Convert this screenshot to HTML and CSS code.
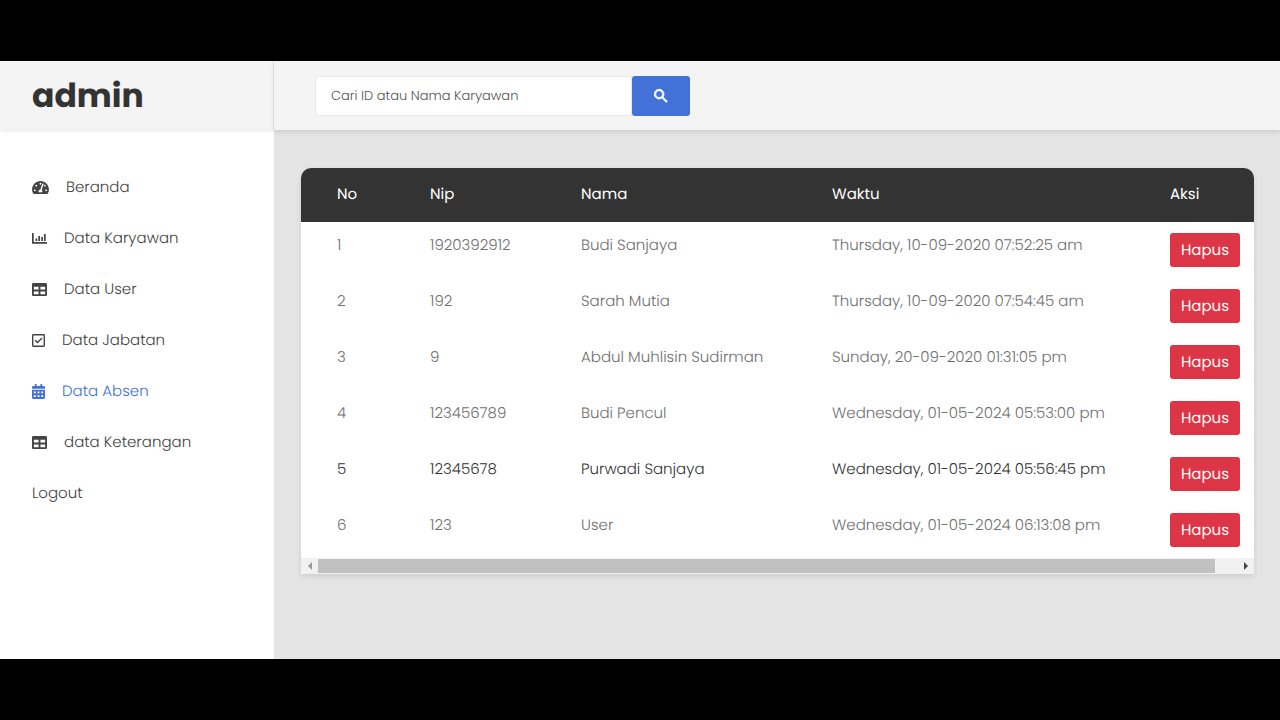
FILE: index.html
```
<!DOCTYPE html>
<html lang="id">
<head>
    <meta charset="UTF-8">
    <meta name="viewport" content="width=device-width, initial-scale=1.0">
    <title>Data Absen</title>
    <link rel="stylesheet" href="styles.css">
</head>
<body>
    <div class="page">
        <aside class="sidebar">
            <div class="logo">
                <h1>admin</h1>
            </div>
            <nav class="menu">
                <ul>
                    <li>
                        <a href="#">
                            <svg width="17" height="15" viewBox="0 0 576 512"><path d="M288 32C128.94 32 0 160.94 0 320c0 52.8 14.25 102.26 39.06 144.8 5.61 9.62 16.3 15.2 27.44 15.2h443c11.14 0 21.83-5.58 27.44-15.2C561.75 422.26 576 372.8 576 320c0-159.06-128.94-288-288-288zm0 64c14.71 0 26.58 10.13 30.32 23.65-1.11 2.26-2.64 4.23-3.45 6.67l-9.22 27.67c-5.13 3.49-10.97 6.01-17.64 6.01-17.67 0-32-14.33-32-32S270.33 96 288 96zM96 384c-17.67 0-32-14.33-32-32s14.33-32 32-32 32 14.33 32 32-14.33 32-32 32zm48-160c-17.67 0-32-14.33-32-32s14.33-32 32-32 32 14.33 32 32-14.33 32-32 32zm246.77-72.41l-61.33 184C343.13 347.33 352 364.54 352 384c0 11.72-3.38 22.55-8.88 32H232.88c-5.5-9.45-8.88-20.28-8.88-32 0-33.94 26.5-61.43 59.9-63.59l61.34-184.01c4.17-12.56 17.73-19.45 30.36-15.17 12.57 4.19 19.35 17.79 15.17 30.36zm14.66 57.2l15.52-46.55c3.47-1.29 7.13-2.23 11.05-2.23 17.67 0 32 14.33 32 32s-14.33 32-32 32c-11.38-.01-20.89-6.28-26.57-15.22zM480 384c-17.67 0-32-14.33-32-32s14.33-32 32-32 32 14.33 32 32-14.33 32-32 32z"/></svg>
                            Beranda
                        </a>
                    </li>
                    <li>
                        <a href="#">
                            <svg width="15" height="15" viewBox="0 0 15 15"><path d="M0 2h1.700v9H15v1.800H.5a.5.5 0 0 1-.5-.5zM3.500 7.500h1.700V10H3.500zM6.300 5H8v5H6.300zM9.200 6h1.700v4H9.200zM12 3h1.700v7H12z"/></svg>
                            Data Karyawan
                        </a>
                    </li>
                    <li>
                        <a href="#">
                            <svg width="15" height="15" viewBox="0 0 512 512"><path d="M464 32H48C21.49 32 0 53.49 0 80v352c0 26.51 21.490 48 48 48h416c26.510 0 48-21.490 48-48V80c0-26.510-21.490-48-48-48zM224 416H64v-96h160v96zm0-160H64v-96h160v96zm224 160H288v-96h160v96zm0-160H288v-96h160v96z"/></svg>
                            Data User
                        </a>
                    </li>
                    <li>
                        <a href="#">
                            <svg width="13" height="15" viewBox="0 0 448 512"><path fill-rule="evenodd" d="M48 32h352a48 48 0 0 1 48 48v352a48 48 0 0 1-48 48H48a48 48 0 0 1-48-48V80a48 48 0 0 1 48-48zm0 48v352h352V80zM88 262l36-35 66 65 136-136 35 35-171 171z"/></svg>
                            Data Jabatan
                        </a>
                    </li>
                    <li>
                        <a href="#" class="active">
                            <svg width="13" height="15" viewBox="0 0 448 512"><path fill-rule="evenodd" d="M0 160v-48a48 48 0 0 1 48-48h48V12a12 12 0 0 1 12-12h40a12 12 0 0 1 12 12v52h128V12a12 12 0 0 1 12-12h40a12 12 0 0 1 12 12v52h48a48 48 0 0 1 48 48v48zM0 192h448v272a48 48 0 0 1-48 48H48a48 48 0 0 1-48-48zM64 256v64h64v-64zM192 256v64h64v-64zM320 256v64h64v-64zM64 384v64h64v-64zM192 384v64h64v-64zM320 384v64h64v-64z"/></svg>
                            Data Absen
                        </a>
                    </li>
                    <li>
                        <a href="#">
                            <svg width="15" height="15" viewBox="0 0 512 512"><path d="M464 32H48C21.49 32 0 53.49 0 80v352c0 26.51 21.490 48 48 48h416c26.510 0 48-21.490 48-48V80c0-26.510-21.490-48-48-48zM224 416H64v-96h160v96zm0-160H64v-96h160v96zm224 160H288v-96h160v96zm0-160H288v-96h160v96z"/></svg>
                            data Keterangan
                        </a>
                    </li>
                    <li><a href="#">Logout</a></li>
                </ul>
            </nav>
        </aside>

        <div class="content">
            <header class="header">
                <form class="search">
                    <input type="text" name="cari" placeholder="Cari ID atau Nama Karyawan" aria-label="Cari ID atau Nama Karyawan">
                    <button type="submit" aria-label="Cari">
                        <svg width="18" height="18" viewBox="0 0 24 24"><path stroke="currentColor" d="M15.5 14h-.79l-.28-.27A6.47 6.47 0 0 0 16 9.500 6.500 6.500 0 1 0 9.500 16c1.610 0 3.090-.590 4.230-1.570l.270.280v.790l5 4.990L20.490 19l-4.990-5zm-6 0C7.010 14 5 11.990 5 9.500S7.010 5 9.500 5 14 7.010 14 9.500 11.990 14 9.500 14z"/></svg>
                    </button>
                </form>
            </header>

            <main>
                <div class="card">
                    <div class="table-wrap">
                        <table>
                            <colgroup>
                                <col class="col-no">
                                <col class="col-nip">
                                <col class="col-nama">
                                <col class="col-waktu">
                                <col>
                            </colgroup>
                            <thead>
                                <tr>
                                    <th>No</th>
                                    <th>Nip</th>
                                    <th>Nama</th>
                                    <th>Waktu</th>
                                    <th>Aksi</th>
                                </tr>
                            </thead>
                            <tbody>
                                <tr>
                                    <td>1</td>
                                    <td>1920392912</td>
                                    <td>Budi Sanjaya</td>
                                    <td>Thursday, 10-09-2020 07:52:25 am</td>
                                    <td><button type="button" class="btn-hapus">Hapus</button></td>
                                </tr>
                                <tr>
                                    <td>2</td>
                                    <td>192</td>
                                    <td>Sarah Mutia</td>
                                    <td>Thursday, 10-09-2020 07:54:45 am</td>
                                    <td><button type="button" class="btn-hapus">Hapus</button></td>
                                </tr>
                                <tr>
                                    <td>3</td>
                                    <td>9</td>
                                    <td>Abdul Muhlisin Sudirman</td>
                                    <td>Sunday, 20-09-2020 01:31:05 pm</td>
                                    <td><button type="button" class="btn-hapus">Hapus</button></td>
                                </tr>
                                <tr>
                                    <td>4</td>
                                    <td>123456789</td>
                                    <td>Budi Pencul</td>
                                    <td>Wednesday, 01-05-2024 05:53:00 pm</td>
                                    <td><button type="button" class="btn-hapus">Hapus</button></td>
                                </tr>
                                <tr class="hover">
                                    <td>5</td>
                                    <td>12345678</td>
                                    <td>Purwadi Sanjaya</td>
                                    <td>Wednesday, 01-05-2024 05:56:45 pm</td>
                                    <td><button type="button" class="btn-hapus">Hapus</button></td>
                                </tr>
                                <tr>
                                    <td>6</td>
                                    <td>123</td>
                                    <td>User</td>
                                    <td>Wednesday, 01-05-2024 06:13:08 pm</td>
                                    <td><button type="button" class="btn-hapus">Hapus</button></td>
                                </tr>
                            </tbody>
                        </table>
                    </div>
                    <div class="scrollbar">
                        <button type="button" class="arrow" aria-label="Geser kiri" disabled>
                            <svg width="4" height="8" viewBox="0 0 4 8"><path d="M4 0v8L0 4z"/></svg>
                        </button>
                        <div class="track"><div class="thumb"></div></div>
                        <button type="button" class="arrow" aria-label="Geser kanan">
                            <svg width="4" height="8" viewBox="0 0 4 8"><path d="M0 0v8l4-4z"/></svg>
                        </button>
                    </div>
                </div>
            </main>
        </div>
    </div>
</body>
</html>
```
FILE: styles.css
```
* {
    box-sizing: border-box;
    margin: 0;
    padding: 0;
}

body {
    display: flex;
    min-height: 100vh;
    padding: 61px 0;
    background: #000;
    color: #4d4d4d;
    font-family: Poppins, Inter, sans-serif;
    font-size: 15px;
    line-height: 26px;
    text-rendering: geometricPrecision;
}

button,
input {
    font-family: inherit;
    border: none;
    text-rendering: inherit;
}

svg {
    display: block;
    fill: currentColor;
}

.page {
    display: flex;
    flex: 1;
    background: #e4e4e4;
}

/* Sidebar */
.sidebar {
    width: 274px;
    flex-shrink: 0;
    background: #fff;
}

.logo {
    display: flex;
    align-items: center;
    height: 69px;
    padding: 0 32px;
    background: #f4f4f4;
    border-right: 1px solid #e4e4e4;
    box-shadow: 0 1px 3px rgba(0, 0, 0, 0.1);
}

.logo h1 {
    color: #333;
    font-size: 33px;
    font-weight: 700;
}

.menu {
    padding: 32px 32px 0;
}

.menu ul {
    list-style: none;
}

.menu a {
    display: flex;
    align-items: center;
    gap: 17px;
    height: 51px;
    color: #444;
    font-weight: 300;
    text-decoration: none;
}

.menu a.active,
.menu a:hover {
    color: #4272d7;
}

/* Header */
.content {
    flex: 1;
    min-width: 0;
}

.header {
    display: flex;
    align-items: center;
    height: 69px;
    padding: 0 41px;
    background: #f4f4f4;
    box-shadow: 0 2px 4px rgba(0, 0, 0, 0.1);
}

.search {
    display: flex;
    width: 375px;
    height: 40px;
}

.search input {
    flex: 1;
    min-width: 0;
    padding: 0 15px;
    border: 1px solid #e8e8e8;
    border-radius: 3px 0 0 3px;
    background: #fff;
    color: #666;
    font-size: 13px;
    font-weight: 300;
}

.search input::placeholder {
    color: #555;
}

.search button {
    display: flex;
    align-items: center;
    justify-content: center;
    width: 58px;
    border-radius: 3px;
    background: #4272d7;
    color: #fff;
    cursor: pointer;
}

/* Tabel absen */
main {
    padding: 38px 26px 38px 27px;
}

.card {
    background: #fff;
    border-radius: 10px 10px 0 0;
    box-shadow: 0 2px 5px rgba(0, 0, 0, 0.1);
}

.table-wrap {
    overflow: hidden;
    border-radius: 10px 10px 0 0;
}

table {
    width: calc(100% + 22px);
    table-layout: fixed;
    border-collapse: collapse;
}

.col-no {
    width: 93px;
}

.col-nip {
    width: 151px;
}

.col-nama {
    width: 251px;
}

.col-waktu {
    width: 338px;
}

th,
td {
    padding-left: 36px;
    text-align: left;
    white-space: nowrap;
}

th {
    height: 54px;
    background: #333;
    color: #fff;
    font-weight: 400;
}

td {
    height: 56px;
    padding-top: 11px;
    color: #707070;
    font-weight: 300;
    vertical-align: top;
}

.hover td,
tbody tr:hover td {
    color: #333;
}

.btn-hapus {
    display: block;
    width: 70px;
    height: 34px;
    border-radius: 3px;
    background: #dc3545;
    color: #fff;
    font-size: 15px;
    cursor: pointer;
}

.scrollbar {
    display: flex;
    height: 16px;
    background: #f1f1f1;
}

.arrow {
    display: flex;
    align-items: center;
    justify-content: center;
    width: 17px;
    background: none;
    color: #444;
}

.arrow:disabled {
    color: #999;
}

.track {
    flex: 1;
    padding: 1px 0;
}

.thumb {
    width: calc(100% - 22px);
    height: 100%;
    background: #c1c1c1;
}
```
